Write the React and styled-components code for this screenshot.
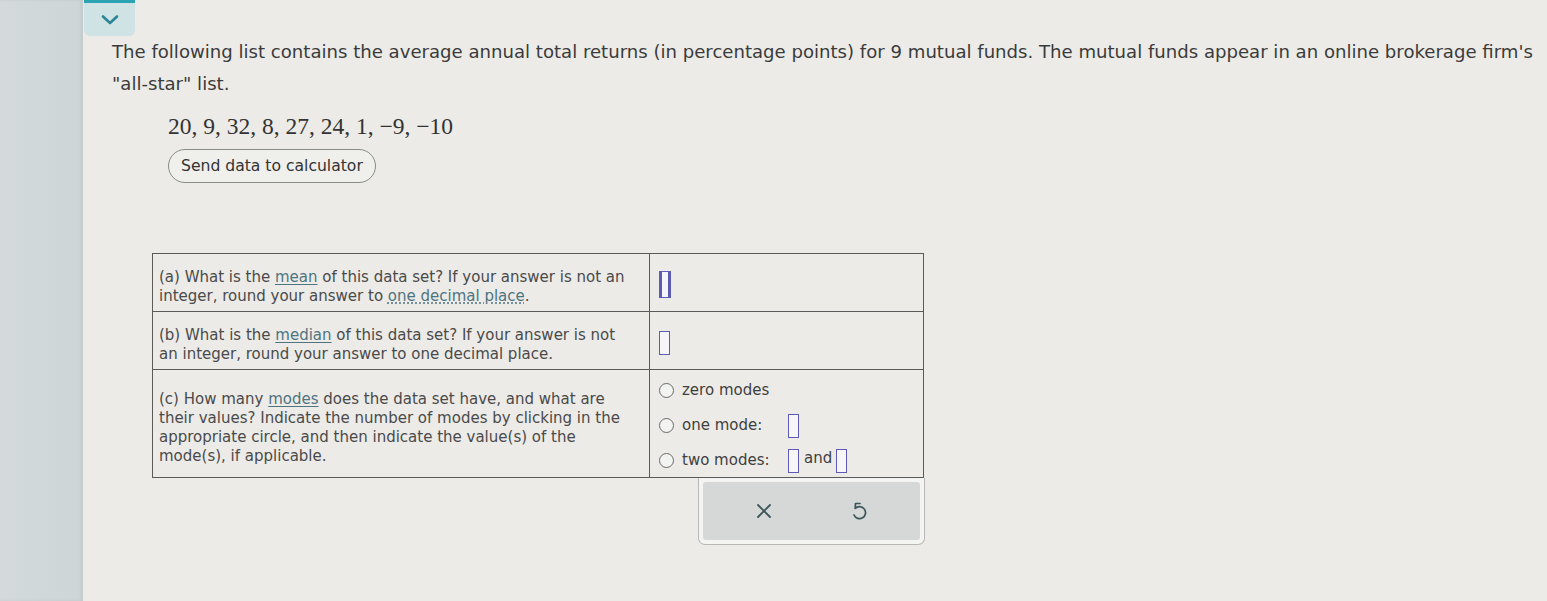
import styled, { createGlobalStyle } from 'styled-components';

const GlobalStyle = createGlobalStyle`
  html, body {
    margin: 0;
    padding: 0;
    background: #ecebe8;
  }
  body {
    font-family: "DejaVu Sans", Verdana, sans-serif;
    overflow: hidden;
  }
`;

const Page = styled.div`
  display: flex;
  width: 1547px;
  height: 601px;
  background: #ecebe8;
`;

const Sidebar = styled.aside`
  width: 83px;
  flex-shrink: 0;
  background: linear-gradient(90deg, #d4dadb 0%, #cdd5d7 100%);
  box-shadow: inset -2px 0 3px rgba(0, 0, 0, 0.06);
`;

const Main = styled.main`
  flex: 1;
  display: flex;
  flex-direction: column;
  align-items: flex-start;
`;

const Tab = styled.div`
  margin-left: 1px;
  width: 51px;
  height: 33px;
  display: flex;
  align-items: center;
  justify-content: center;
  background: #cfe3e4;
  border-top: 3px solid #2ba3b2;
  border-radius: 0 0 6px 6px;
  color: #2c8596;
`;

const Content = styled.div`
  padding-left: 29px;
  display: flex;
  flex-direction: column;
  align-items: flex-start;
`;

const Intro = styled.p`
  margin: 0;
  width: 1432px;
  font-size: 18.1px;
  line-height: 32px;
  color: #3b3b3b;
`;

const DataList = styled.div`
  margin: 12px 0 0 56px;
  font-family: "Liberation Serif", "Times New Roman", serif;
  font-size: 23.5px;
  line-height: 28px;
  color: #333;
`;

const CalcButton = styled.button`
  margin: 9px 0 0 56px;
  height: 34px;
  padding: 0 12px;
  border: 1.5px solid #8a8a88;
  border-radius: 17px;
  background: #efefec;
  font-family: "DejaVu Sans", Verdana, sans-serif;
  font-size: 15.6px;
  color: #333;
`;

const QuestionTable = styled.table`
  margin: 70px 0 0 40px;
  width: 772px;
  table-layout: fixed;
  border-collapse: collapse;
  font-size: 15px;
  line-height: 19px;
  color: #4a4a4a;

  td {
    border: 1.5px solid #5a5a5a;
    vertical-align: middle;
  }
`;

const QuestionRow = styled.tr`
  height: ${(p) => p.$height}px;
`;

const QuestionCell = styled.td`
  width: 476px;
  padding: 11px 14px 2px 6px;
`;

const AnswerCell = styled.td`
  padding: 8px 0 4px 9px;
`;

const Term = styled.span`
  color: #4f7480;
  text-decoration: underline;
  text-decoration-style: ${(p) => (p.$dotted ? 'dotted' : 'solid')};
  text-underline-offset: 2px;
`;

const AnswerBox = styled.span`
  display: inline-block;
  width: ${(p) => (p.$focused ? 6 : 9)}px;
  height: ${(p) => (p.$focused ? 25 : 22)}px;
  border: 1.5px solid #5d5bb5;
  border-left-width: ${(p) => (p.$focused ? 3 : 1.5)}px;
  border-right-width: ${(p) => (p.$focused ? 3 : 1.5)}px;
  background: #f6f6f8;
  vertical-align: middle;
`;

const ModeList = styled.div`
  display: flex;
  flex-direction: column;
  gap: 10px;
`;

const ModeRow = styled.label`
  display: flex;
  align-items: center;
  height: 25px;
  font-size: 15px;
  color: #3f3f3f;
`;

const Radio = styled.span`
  width: 13px;
  height: 13px;
  border: 1.5px solid #6a6a6a;
  border-radius: 50%;
  background: #f3f3f1;
  margin-right: 8px;
  flex-shrink: 0;
`;

const ModeLabel = styled.span`
  width: 106px;
`;

const AndText = styled.span`
  margin: 0 4px 4px 5px;
  font-size: 15px;
`;

const ActionWrap = styled.div`
  margin: 0 0 0 586px;
  width: 227px;
  height: 67px;
  box-sizing: border-box;
  padding: 4px;
  border: 1.5px solid #b8b8b6;
  border-top: none;
  border-radius: 0 0 7px 7px;
  background: #f4f4f2;
`;

const ActionBar = styled.div`
  height: 100%;
  display: flex;
  align-items: center;
  justify-content: space-around;
  padding: 0 14px;
  background: #d6d8d8;
  border-radius: 3px;
`;

const IconButton = styled.button`
  border: none;
  background: none;
  padding: 0;
  color: #3b5558;
  display: flex;
  align-items: center;
  justify-content: center;
`;

function Chevron() {
  return (
    <svg width="18" height="12" viewBox="0 0 18 12" fill="none">
      <path d="M2 2.5 L9 9 L16 2.5" stroke="currentColor" strokeWidth="2.6" strokeLinecap="round" strokeLinejoin="round" />
    </svg>
  );
}

function CloseIcon() {
  return (
    <svg width="18" height="18" viewBox="0 0 18 18" fill="none">
      <path d="M3 3 L15 15 M15 3 L3 15" stroke="currentColor" strokeWidth="1.8" strokeLinecap="round" />
    </svg>
  );
}

function UndoIcon() {
  return (
    <svg width="18" height="20" viewBox="0 0 18 20" fill="none">
      <path
        d="M5.5 2.5 L10 2.5 M5.5 2.5 L5.2 7.5 A6 6 0 1 1 4 14"
        stroke="currentColor"
        strokeWidth="1.7"
        strokeLinecap="round"
        strokeLinejoin="round"
      />
    </svg>
  );
}

export default function App() {
  return (
    <>
      <GlobalStyle />
      <Page>
        <Sidebar />
        <Main>
          <Tab>
            <Chevron />
          </Tab>
          <Content>
            <Intro>
              The following list contains the average annual total returns (in percentage points) for 9 mutual
              funds. The mutual funds appear in an online brokerage firm's "all-star" list.
            </Intro>
            <DataList>20, 9, 32, 8, 27, 24, 1, −9, −10</DataList>
            <CalcButton>Send data to calculator</CalcButton>

            <QuestionTable>
              <tbody>
                <QuestionRow $height={58}>
                  <QuestionCell>
                    (a) What is the <Term>mean</Term> of this data set? If your answer is not an integer, round
                    your answer to <Term $dotted>one decimal place</Term>.
                  </QuestionCell>
                  <AnswerCell>
                    <AnswerBox $focused />
                  </AnswerCell>
                </QuestionRow>
                <QuestionRow $height={58}>
                  <QuestionCell>
                    (b) What is the <Term>median</Term> of this data set? If your answer is not an integer, round
                    your answer to one decimal place.
                  </QuestionCell>
                  <AnswerCell>
                    <AnswerBox />
                  </AnswerCell>
                </QuestionRow>
                <QuestionRow $height={106}>
                  <QuestionCell>
                    (c) How many <Term>modes</Term> does the data set have, and what are their values? Indicate
                    the number of modes by clicking in the appropriate circle, and then indicate the value(s) of
                    the mode(s), if applicable.
                  </QuestionCell>
                  <AnswerCell>
                    <ModeList>
                      <ModeRow>
                        <Radio />
                        <ModeLabel>zero modes</ModeLabel>
                      </ModeRow>
                      <ModeRow>
                        <Radio />
                        <ModeLabel>one mode:</ModeLabel>
                        <AnswerBox />
                      </ModeRow>
                      <ModeRow>
                        <Radio />
                        <ModeLabel>two modes:</ModeLabel>
                        <AnswerBox />
                        <AndText>and</AndText>
                        <AnswerBox />
                      </ModeRow>
                    </ModeList>
                  </AnswerCell>
                </QuestionRow>
              </tbody>
            </QuestionTable>

            <ActionWrap>
              <ActionBar>
                <IconButton aria-label="Clear">
                  <CloseIcon />
                </IconButton>
                <IconButton aria-label="Undo">
                  <UndoIcon />
                </IconButton>
              </ActionBar>
            </ActionWrap>
          </Content>
        </Main>
      </Page>
    </>
  );
}
